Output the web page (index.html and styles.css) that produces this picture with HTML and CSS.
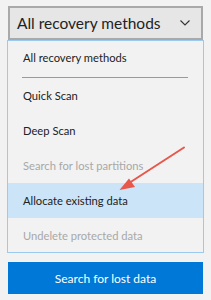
FILE: index.html
```html
<!DOCTYPE html>
<html>
<head>
<meta charset="utf-8">
<link rel="stylesheet" href="styles.css">
</head>
<body>
<div class="wrap">
  <div class="select">
    <span class="select-label">All recovery methods</span>
    <svg class="chev" width="10" height="6" viewBox="0 0 10 6"><path d="M0.5 0.5 L5 5 L9.5 0.5" fill="none" stroke="#333" stroke-width="1.1"/></svg>
  </div>
  <ul class="menu">
    <li class="item first">All recovery methods</li>
    <li class="sep"></li>
    <li class="item">Quick Scan</li>
    <li class="item">Deep Scan</li>
    <li class="item disabled">Search for lost partitions</li>
    <li class="item selected">Allocate existing data</li>
    <li class="item disabled">Undelete protected data</li>
  </ul>
  <button class="btn">Search for lost data</button>
  <svg class="arrow" width="211" height="300" viewBox="0 0 211 300">
    <line x1="184" y1="147.5" x2="126" y2="185" stroke="#e8574a" stroke-width="2" stroke-linecap="round"/>
    <path d="M119.5 190 L129 178.5 L135 187 Z" fill="#e8574a"/>
  </svg>
</div>
</body>
</html>
```
FILE: styles.css
```css
html, body {
  margin: 0;
  padding: 0;
  background: #f2f2f2;
}
body {
  font-family: Lato, "Open Sans", sans-serif;
  width: 211px;
  height: 300px;
  overflow: hidden;
}
.wrap {
  position: relative;
  padding: 6px 8px 0;
  height: 300px;
  box-sizing: border-box;
}
.select {
  height: 34px;
  box-sizing: border-box;
  border: 2px solid #a9a9a9;
  background: #e6e6e6;
  display: flex;
  align-items: center;
  justify-content: space-between;
  padding: 0 11px 0 7px;
}
.select-label {
  font-size: 15.5px;
  color: #222222;
}
.chev {
  display: block;
}
.menu {
  list-style: none;
  margin: 0 -1px;
  padding: 0;
  border: 1px solid #9ccaee;
  background: #f2f2f2;
  height: 213px;
  box-sizing: border-box;
}
.item {
  height: 35px;
  display: flex;
  align-items: center;
  padding-left: 15px;
  font-size: 11.2px;
  color: #222222;
}
.item.first {
  height: 33px;
}
.sep {
  height: 1px;
  background: #9a9a9a;
  margin: 3px 15px 0 14px;
}
.item.disabled {
  color: #a8a8a8;
}
.item.selected {
  background: #cce4f7;
}
.btn {
  display: block;
  width: 100%;
  margin-top: 9px;
  height: 32px;
  border: 0;
  background: #0078d7;
  color: #ffffff;
  font-family: Lato, "Open Sans", sans-serif;
  font-size: 12px;
  padding: 0;
}
.arrow {
  position: absolute;
  left: 0;
  top: 0;
  pointer-events: none;
}
```
